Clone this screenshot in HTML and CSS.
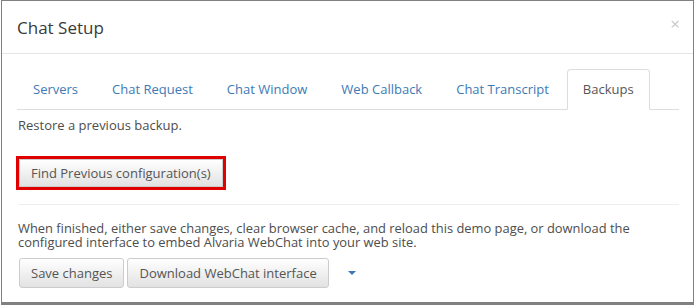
FILE: index.html
```html
<!DOCTYPE html>
<html lang="en">

<head>
    <meta charset="UTF-8">
    <meta name="viewport" content="width=device-width, initial-scale=1.0">
    <title>Chat Setup</title>
    <link rel="stylesheet" href="styles.css">
</head>

<body>
    <div class="modal">
        <div class="modal-header">
            <h4 class="modal-title">Chat Setup</h4>
            <span class="close">&times;</span>
        </div>
        <div class="modal-body">
            <ul class="nav-tabs">
                <li><a href="#">Servers</a></li>
                <li><a href="#">Chat Request</a></li>
                <li><a href="#">Chat Window</a></li>
                <li><a href="#">Web Callback</a></li>
                <li><a href="#">Chat Transcript</a></li>
                <li class="active"><a href="#">Backups</a></li>
            </ul>
            <p class="intro">Restore a previous backup.</p>
            <div class="highlight">
                <button class="btn">Find Previous configuration(s)</button>
            </div>
            <hr>
            <p class="note">When finished, either save changes, clear browser cache, and reload this demo page, or download the configured interface to embed Alvaria WebChat into your web site.</p>
            <div class="actions">
                <button class="btn">Save changes</button>
                <button class="btn">Download WebChat interface</button>
                <span class="caret"></span>
            </div>
        </div>
    </div>
</body>

</html>
```

FILE: styles.css
```css
html, body {
    margin: 0;
    padding: 0;
    background: #fff;
}

body {
    font-family: "Open Sans", "DejaVu Sans", sans-serif;
    font-size: 13px;
    color: #4d4d4d;
}

.modal {
    box-sizing: border-box;
    width: 694px;
    height: 305px;
    margin-left: 1px;
    border: 1px solid #808080;
    border-right-width: 2px;
    border-bottom-width: 3px;
    overflow: hidden;
}

.modal-header {
    display: flex;
    justify-content: space-between;
    align-items: center;
    height: 52px;
    padding: 0 15px;
    border-bottom: 1px solid #e5e5e5;
}

.modal-title {
    margin: 0;
    font-size: 17px;
    font-weight: normal;
    color: #3a3a3a;
}

.close {
    font-size: 17px;
    color: #c8c8c8;
    margin-right: -2px;
    margin-top: -8px;
}

.modal-body {
    padding: 15px 14px 0 14px;
}

.nav-tabs {
    display: flex;
    list-style: none;
    margin: 0 0 0 1px;
    padding: 0;
    border-bottom: 1px solid #ddd;
}

.nav-tabs li {
    margin-right: 2px;
    margin-bottom: -1px;
}

.nav-tabs a {
    display: block;
    padding: 10px 15px;
    line-height: 19px;
    border: 1px solid transparent;
    border-radius: 4px 4px 0 0;
    color: #3d7ab5;
    text-decoration: none;
}

.nav-tabs .active a {
    color: #555;
    background: #fff;
    border-color: #ddd #ddd transparent;
}

.intro {
    margin: 6px 0 22px 2px;
    line-height: 18px;
}

.highlight {
    display: inline-block;
    border: 3px solid #e00000;
}

.btn {
    font-family: inherit;
    font-size: 13px;
    color: #555;
    padding: 5px 12px;
    line-height: 18px;
    border: 1px solid #ccc;
    border-radius: 3px;
    background: linear-gradient(#fff, #e2e2e2);
    cursor: pointer;
}

.highlight .btn {
    border-radius: 0;
    padding: 4px 11px;
}

hr {
    margin: 14px 0 0 2px;
    border: 0;
    border-top: 1px solid #eee;
}

.note {
    margin: 16px 0 9px 2px;
    line-height: 14px;
    font-size: 12.9px;
}

.actions {
    display: flex;
    align-items: center;
    gap: 3px;
    margin-left: 3px;
}

.actions .btn {
    padding: 5px 11px;
}

.caret {
    width: 0;
    height: 0;
    margin-left: 16px;
    border-top: 4px solid #3d7ab5;
    border-left: 4px solid transparent;
    border-right: 4px solid transparent;
}
```
